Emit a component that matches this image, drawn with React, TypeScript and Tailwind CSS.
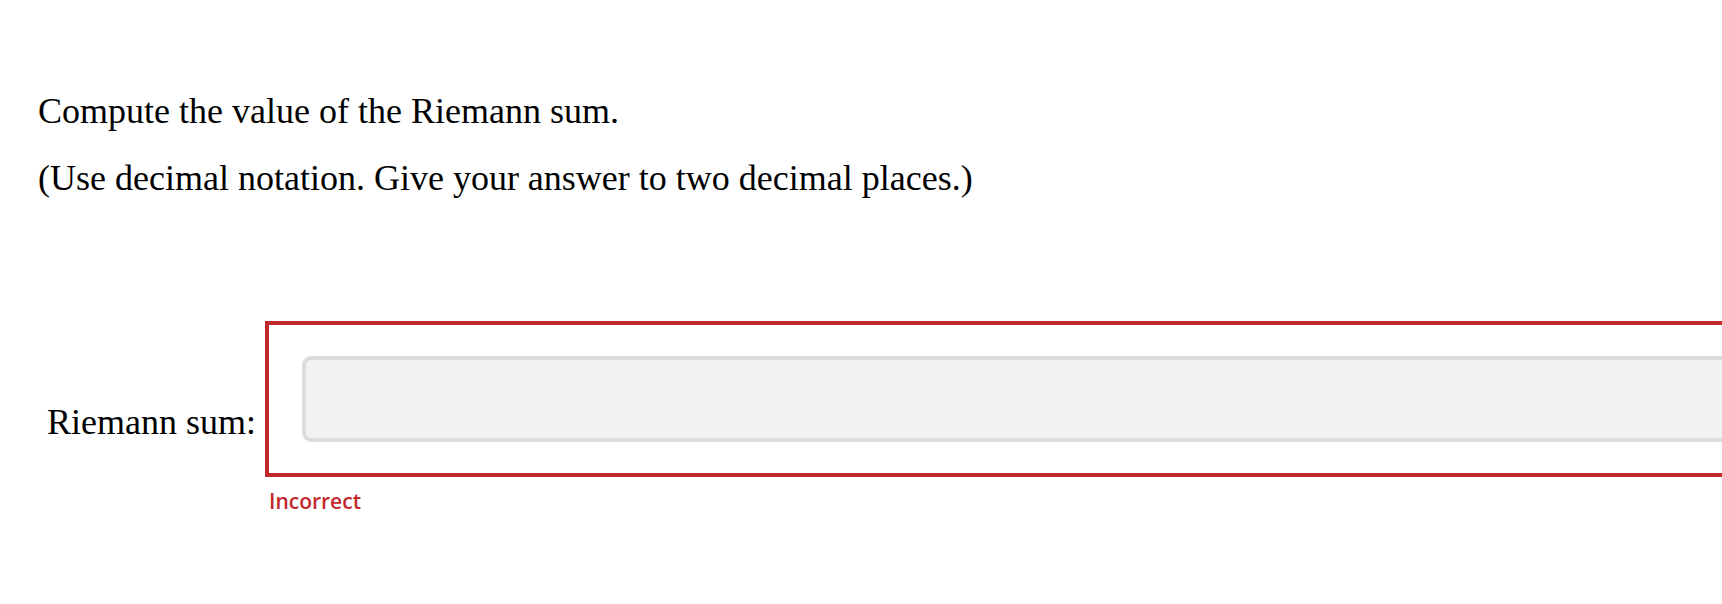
export default function App() {
  return (
    <div className="w-full h-[604px] overflow-hidden bg-white text-black">
      <div className="pt-[90px] pl-[38px] font-['Liberation_Serif',serif] text-[36px] leading-[42px]">
        <p>Compute the value of the Riemann sum.</p>
        <p className="mt-[25px]">(Use decimal notation. Give your answer to two decimal places.)</p>
      </div>

      <div className="mt-[122px] flex items-start">
        <label className="ml-[47px] mt-[80px] w-[208px] shrink-0 font-['Liberation_Serif',serif] text-[36px] leading-[42px] whitespace-nowrap">
          Riemann sum:
        </label>
        <div className="ml-[10px] shrink-0">
          <div className="w-[1600px] border-4 border-[#c1292c] px-[33px] py-[31px]">
            <input
              type="text"
              aria-label="Riemann sum"
              className="block h-[86px] w-full rounded-[9px] border-4 border-[#dcdcdc] bg-[#f2f2f2] outline-none"
            />
          </div>
          <div className="mt-[9px] pl-[4px] font-['Open_Sans',sans-serif] text-[21px] font-semibold leading-[30px] text-[#c1292c]">
            Incorrect
          </div>
        </div>
      </div>
    </div>
  );
}
